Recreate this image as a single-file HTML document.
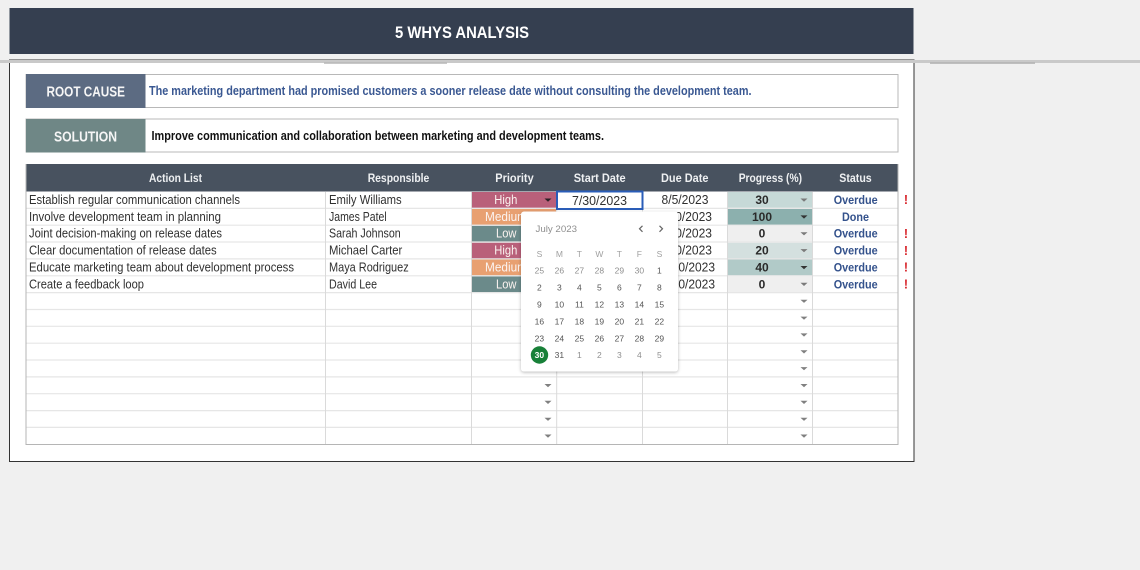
<!DOCTYPE html>
<html><head><meta charset="utf-8"><title>5 Whys Analysis</title>
<style>
html,body{margin:0;padding:0;background:#f0f0f0;width:1140px;height:570px;overflow:hidden}
svg{display:block;font-family:"Liberation Sans",sans-serif}
.d{font-size:12.5px;fill:#303030}
.h{font-size:12.3px;font-weight:bold;fill:#eef0f2}
.w{font-size:12.5px;fill:#fbf3f0}
.o{font-size:12.3px;font-weight:bold;fill:#34528c}
.p{font-size:12px;font-weight:bold;fill:#2a2a2a;text-anchor:middle}
.x{font-size:12.5px;font-weight:bold;fill:#d8262c;text-anchor:middle}
.c text,.c{font-size:8.5px;text-anchor:middle}
.m{fill:#8f8f8f}.n{fill:#555}.y{fill:#a0a0a0}
</style></head><body>
<svg width="1140" height="570" viewBox="0 0 1140 570" xmlns="http://www.w3.org/2000/svg">
<rect width="1140" height="570" fill="#f0f0f0"/>
<!-- panel -->
<rect x="9.5" y="60" width="904.5" height="401.5" fill="#fff" stroke="#333" stroke-width="1"/>
<rect x="0" y="60" width="1140" height="3" fill="#c9c9c9"/>
<rect x="324" y="62.5" width="123" height="1.2" fill="#b0b0b0"/>
<rect x="930" y="62.5" width="105" height="1.2" fill="#a8a8a8"/>
<!-- title -->
<rect x="9.5" y="8" width="904" height="46" fill="#353f50"/>
<text x="395" y="38" font-size="16.5" font-weight="bold" fill="#fff" textLength="134" lengthAdjust="spacingAndGlyphs">5 WHYS ANALYSIS</text>
<!-- root cause -->
<rect x="26" y="74.5" width="872" height="33" fill="#fff" stroke="#b8b8b8"/>
<rect x="26" y="74" width="119.5" height="34" fill="#5c6b82"/>
<text x="46.5" y="96.3" font-size="14.5" font-weight="bold" fill="#f6f6f6" textLength="78.5" lengthAdjust="spacingAndGlyphs">ROOT CAUSE</text>
<text x="149" y="94.8" font-size="12.5" font-weight="bold" fill="#3a5892" textLength="602.5" lengthAdjust="spacingAndGlyphs">The marketing department had promised customers a sooner release date without consulting the development team.</text>
<!-- solution -->
<rect x="26" y="119" width="872" height="33" fill="#fff" stroke="#b8b8b8"/>
<rect x="26" y="119" width="119.5" height="33.5" fill="#6f8786"/>
<text x="54" y="141.3" font-size="14.5" font-weight="bold" fill="#f6f6f6" textLength="63" lengthAdjust="spacingAndGlyphs">SOLUTION</text>
<text x="151.5" y="139.8" font-size="12.5" font-weight="bold" fill="#111" textLength="452.5" lengthAdjust="spacingAndGlyphs">Improve communication and collaboration between marketing and development teams.</text>
<!-- table header -->
<rect x="26" y="164" width="872" height="27.5" fill="#48525f"/>
<text class="h" x="149" y="181.8" textLength="53" lengthAdjust="spacingAndGlyphs">Action List</text>
<text class="h" x="367.7" y="181.8" textLength="61.6" lengthAdjust="spacingAndGlyphs">Responsible</text>
<text class="h" x="495.3" y="181.8" textLength="38.4" lengthAdjust="spacingAndGlyphs">Priority</text>
<text class="h" x="573.7" y="181.8" textLength="52" lengthAdjust="spacingAndGlyphs">Start Date</text>
<text class="h" x="661" y="181.8" textLength="47.5" lengthAdjust="spacingAndGlyphs">Due Date</text>
<text class="h" x="738.7" y="181.8" textLength="63.3" lengthAdjust="spacingAndGlyphs">Progress (%)</text>
<text class="h" x="839.3" y="181.8" textLength="32.4" lengthAdjust="spacingAndGlyphs">Status</text>
<!-- coloured cells -->
<rect x="472" y="192" width="84" height="15.8" fill="#b9607a"/>
<rect x="472" y="209" width="84" height="15.8" fill="#e8a071"/>
<rect x="472" y="225.8" width="84" height="15.8" fill="#6b8a8a"/>
<rect x="472" y="242.7" width="84" height="15.8" fill="#b9607a"/>
<rect x="472" y="259.5" width="84" height="15.8" fill="#e8a071"/>
<rect x="472" y="276.4" width="84" height="15.8" fill="#6b8a8a"/>
<rect x="728" y="192" width="84" height="15.8" fill="#c6d9d7"/>
<rect x="728" y="209" width="84" height="15.8" fill="#8cb0ae"/>
<rect x="728" y="225.8" width="84" height="15.8" fill="#efefef"/>
<rect x="728" y="242.7" width="84" height="15.8" fill="#d4e0df"/>
<rect x="728" y="259.5" width="84" height="15.8" fill="#b1cac8"/>
<rect x="728" y="276.4" width="84" height="15.8" fill="#efefef"/>
<!-- grid -->
<g stroke="#e6e6e6" stroke-width="1.2">
<path d="M26 208.4H898M26 225.2H898M26 242H898M26 258.9H898M26 275.8H898M26 292.6H898M26 309.5H898M26 326.3H898M26 343.2H898M26 360H898M26 376.9H898M26 393.7H898M26 410.6H898M26 427.4H898"/>
</g>
<g stroke="#dadada" stroke-width="1">
<path d="M325.5 192V444M471.5 192V444M556.7 192V444M642.5 192V444M727.5 192V444M812.5 192V444"/>
</g>
<path d="M26 164V444.5H898V164" fill="none" stroke="#b5b5b5" stroke-width="1"/>
<!-- action list -->
<text class="d" x="29" y="204" textLength="211" lengthAdjust="spacingAndGlyphs">Establish regular communication channels</text>
<text class="d" x="29" y="220.9" textLength="192" lengthAdjust="spacingAndGlyphs">Involve development team in planning</text>
<text class="d" x="29" y="237.7" textLength="193" lengthAdjust="spacingAndGlyphs">Joint decision-making on release dates</text>
<text class="d" x="29" y="254.6" textLength="187.7" lengthAdjust="spacingAndGlyphs">Clear documentation of release dates</text>
<text class="d" x="29" y="271.4" textLength="265" lengthAdjust="spacingAndGlyphs">Educate marketing team about development process</text>
<text class="d" x="29" y="288.3" textLength="115" lengthAdjust="spacingAndGlyphs">Create a feedback loop</text>
<!-- responsible -->
<text class="d" x="329" y="204" textLength="72.7" lengthAdjust="spacingAndGlyphs">Emily Williams</text>
<text class="d" x="329" y="220.9" textLength="57.7" lengthAdjust="spacingAndGlyphs">James Patel</text>
<text class="d" x="329" y="237.7" textLength="71.7" lengthAdjust="spacingAndGlyphs">Sarah Johnson</text>
<text class="d" x="329" y="254.6" textLength="73.3" lengthAdjust="spacingAndGlyphs">Michael Carter</text>
<text class="d" x="329" y="271.4" textLength="79.7" lengthAdjust="spacingAndGlyphs">Maya Rodriguez</text>
<text class="d" x="329" y="288.3" textLength="48" lengthAdjust="spacingAndGlyphs">David Lee</text>
<!-- priority -->
<text class="w" x="494.3" y="204" textLength="23" lengthAdjust="spacingAndGlyphs">High</text>
<text class="w" x="485" y="220.9" textLength="42" lengthAdjust="spacingAndGlyphs">Medium</text>
<text class="w" x="496" y="237.7" textLength="20.5" lengthAdjust="spacingAndGlyphs">Low</text>
<text class="w" x="494.3" y="254.6" textLength="23" lengthAdjust="spacingAndGlyphs">High</text>
<text class="w" x="485" y="271.4" textLength="42" lengthAdjust="spacingAndGlyphs">Medium</text>
<text class="w" x="496" y="288.3" textLength="20.5" lengthAdjust="spacingAndGlyphs">Low</text>
<!-- start date selected -->
<rect x="557" y="191.5" width="85.5" height="17.5" fill="#fff" stroke="#2a5db8" stroke-width="2"/>
<text class="d" x="572" y="205.2" textLength="55" lengthAdjust="spacingAndGlyphs">7/30/2023</text>
<!-- due dates -->
<text class="d" x="661.5" y="204" textLength="47" lengthAdjust="spacingAndGlyphs">8/5/2023</text>
<text class="d" x="658.5" y="220.9" textLength="53.5" lengthAdjust="spacingAndGlyphs">8/10/2023</text>
<text class="d" x="658.5" y="237.7" textLength="53.5" lengthAdjust="spacingAndGlyphs">8/20/2023</text>
<text class="d" x="658.5" y="254.6" textLength="53.5" lengthAdjust="spacingAndGlyphs">8/30/2023</text>
<text class="d" x="655" y="271.4" textLength="60" lengthAdjust="spacingAndGlyphs">10/10/2023</text>
<text class="d" x="655" y="288.3" textLength="60" lengthAdjust="spacingAndGlyphs">10/20/2023</text>
<!-- progress -->
<text class="p" x="762" y="204">30</text>
<text class="p" x="762" y="220.9">100</text>
<text class="p" x="762" y="237.7">0</text>
<text class="p" x="762" y="254.6">20</text>
<text class="p" x="762" y="271.4">40</text>
<text class="p" x="762" y="288.3">0</text>
<!-- status -->
<text class="o" x="833.7" y="204" textLength="44" lengthAdjust="spacingAndGlyphs">Overdue</text>
<text class="o" x="842" y="220.9" textLength="27" lengthAdjust="spacingAndGlyphs">Done</text>
<text class="o" x="833.7" y="237.7" textLength="44" lengthAdjust="spacingAndGlyphs">Overdue</text>
<text class="o" x="833.7" y="254.6" textLength="44" lengthAdjust="spacingAndGlyphs">Overdue</text>
<text class="o" x="833.7" y="271.4" textLength="44" lengthAdjust="spacingAndGlyphs">Overdue</text>
<text class="o" x="833.7" y="288.3" textLength="44" lengthAdjust="spacingAndGlyphs">Overdue</text>
<text class="x" x="906" y="204">!</text>
<text class="x" x="906" y="238">!</text>
<text class="x" x="906" y="255">!</text>
<text class="x" x="906" y="271.5">!</text>
<text class="x" x="906" y="288.5">!</text>
<!-- arrows -->
<path fill="#2b2025" d="M544.5 198.5h7l-3.5 3.2z"/>
<path fill="#7a7a7a" d="M800.5 198.5h7l-3.5 3.2zM800.5 232.2h7l-3.5 3.2zM800.5 249.1h7l-3.5 3.2zM800.5 282.8h7l-3.5 3.2z"/>
<path fill="#333" d="M800.5 215.4h7l-3.5 3.2zM800.5 266h7l-3.5 3.2z"/>
<path fill="#808080" d="M800.5 299.7h7l-3.5 3.2zM800.5 316.6h7l-3.5 3.2zM800.5 333.4h7l-3.5 3.2zM800.5 350.3h7l-3.5 3.2zM800.5 367.1h7l-3.5 3.2zM800.5 384h7l-3.5 3.2zM800.5 400.8h7l-3.5 3.2zM800.5 417.7h7l-3.5 3.2zM800.5 434.5h7l-3.5 3.2z"/>
<path fill="#808080" d="M544.5 384h7l-3.5 3.2zM544.5 400.8h7l-3.5 3.2zM544.5 417.7h7l-3.5 3.2zM544.5 434.5h7l-3.5 3.2z"/>
<!-- calendar popup -->
<defs><filter id="s" x="-10%" y="-10%" width="120%" height="120%"><feDropShadow dx="0" dy="1" stdDeviation="1.5" flood-color="#000" flood-opacity=".28"/></filter></defs>
<rect x="521" y="211.5" width="157" height="160" rx="3" fill="#fff" filter="url(#s)"/>
<text x="535.5" y="232" font-size="9.5" fill="#8f8f8f" textLength="41.5" lengthAdjust="spacingAndGlyphs">July 2023</text>
<path d="M642.5 225.8l-3 3 3 3M659.5 225.8l3 3-3 3" fill="none" stroke="#666" stroke-width="1.2"/>
<g class="c">
<text class="y" x="539.4" y="257">S</text><text class="y" x="559.4" y="257">M</text><text class="y" x="579.4" y="257">T</text><text class="y" x="599.4" y="257">W</text><text class="y" x="619.4" y="257">T</text><text class="y" x="639.4" y="257">F</text><text class="y" x="659.4" y="257">S</text>
<text class="m" x="539.4" y="273.3">25</text><text class="m" x="559.4" y="273.3">26</text><text class="m" x="579.4" y="273.3">27</text><text class="m" x="599.4" y="273.3">28</text><text class="m" x="619.4" y="273.3">29</text><text class="m" x="639.4" y="273.3">30</text><text class="n" x="659.4" y="273.3">1</text>
<text class="n" x="539.4" y="290.3">2</text><text class="n" x="559.4" y="290.3">3</text><text class="n" x="579.4" y="290.3">4</text><text class="n" x="599.4" y="290.3">5</text><text class="n" x="619.4" y="290.3">6</text><text class="n" x="639.4" y="290.3">7</text><text class="n" x="659.4" y="290.3">8</text>
<text class="n" x="539.4" y="307.3">9</text><text class="n" x="559.4" y="307.3">10</text><text class="n" x="579.4" y="307.3">11</text><text class="n" x="599.4" y="307.3">12</text><text class="n" x="619.4" y="307.3">13</text><text class="n" x="639.4" y="307.3">14</text><text class="n" x="659.4" y="307.3">15</text>
<text class="n" x="539.4" y="324.3">16</text><text class="n" x="559.4" y="324.3">17</text><text class="n" x="579.4" y="324.3">18</text><text class="n" x="599.4" y="324.3">19</text><text class="n" x="619.4" y="324.3">20</text><text class="n" x="639.4" y="324.3">21</text><text class="n" x="659.4" y="324.3">22</text>
<text class="n" x="539.4" y="341.3">23</text><text class="n" x="559.4" y="341.3">24</text><text class="n" x="579.4" y="341.3">25</text><text class="n" x="599.4" y="341.3">26</text><text class="n" x="619.4" y="341.3">27</text><text class="n" x="639.4" y="341.3">28</text><text class="n" x="659.4" y="341.3">29</text>
<circle cx="539.5" cy="355" r="8.7" fill="#188038"/>
<text x="539.4" y="358" fill="#fff" font-weight="bold">30</text><text class="n" x="559.4" y="358">31</text><text class="m" x="579.4" y="358">1</text><text class="m" x="599.4" y="358">2</text><text class="m" x="619.4" y="358">3</text><text class="m" x="639.4" y="358">4</text><text class="m" x="659.4" y="358">5</text>
</g>
</svg>
</body></html>
